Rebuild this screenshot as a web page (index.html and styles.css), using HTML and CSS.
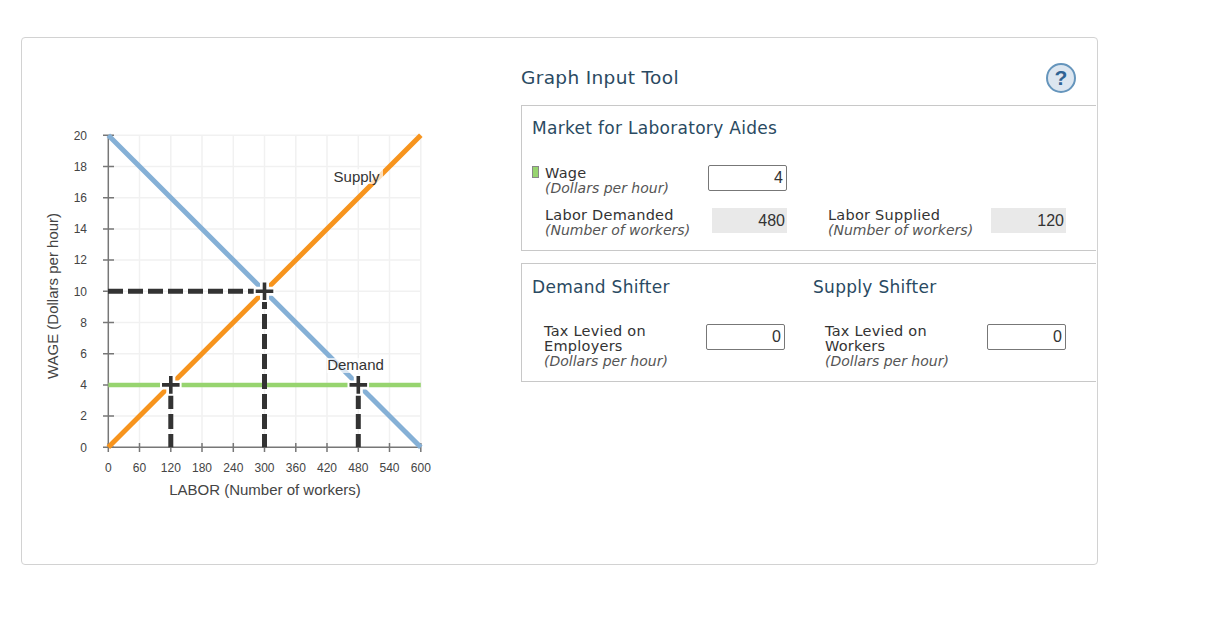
FILE: index.html
```html
<!DOCTYPE html>
<html lang="en">
<head>
  <meta charset="UTF-8">
  <title>Graph Input Tool</title>
  <link rel="stylesheet" href="styles.css">
</head>
<body>
  <div class="card">
    <!-- viewBox uses page coordinates so the plot numbers are easy to read -->
    <svg class="chart" viewBox="22 38 499 526" width="499" height="526">
      <path class="grid" d="M139.5 135V447M170.8 135V447M202 135V447M233.3 135V447M264.5 135V447M295.8 135V447M327 135V447M358.3 135V447M389.5 135V447M420.8 135V447"/>
      <path class="grid" d="M108 135.3H421M108 166.5H421M108 197.7H421M108 228.9H421M108 260.1H421M108 291.3H421M108 322.5H421M108 353.7H421M108 384.9H421M108 416.1H421"/>

      <path class="axis" d="M108.3 135V447.3H421"/>
      <path class="axis" d="M103 135.3H114M103 166.5H114M103 197.7H114M103 228.9H114M103 260.1H114M103 291.3H114M103 322.5H114M103 353.7H114M103 384.9H114M103 416.1H114M103 447.3H114"/>
      <path class="axis" d="M108.3 443V452M139.5 443V452M170.8 443V452M202 443V452M233.3 443V452M264.5 443V452M295.8 443V452M327 443V452M358.3 443V452M389.5 443V452M420.8 443V452"/>

      <text class="tick tick-y" x="87" y="139.5">20</text>
      <text class="tick tick-y" x="87" y="170.7">18</text>
      <text class="tick tick-y" x="87" y="201.9">16</text>
      <text class="tick tick-y" x="87" y="233.1">14</text>
      <text class="tick tick-y" x="87" y="264.3">12</text>
      <text class="tick tick-y" x="87" y="295.5">10</text>
      <text class="tick tick-y" x="87" y="326.7">8</text>
      <text class="tick tick-y" x="87" y="357.9">6</text>
      <text class="tick tick-y" x="87" y="389.1">4</text>
      <text class="tick tick-y" x="87" y="420.3">2</text>
      <text class="tick tick-y" x="87" y="451.5">0</text>

      <text class="tick" x="108.3" y="472">0</text>
      <text class="tick" x="139.5" y="472">60</text>
      <text class="tick" x="170.8" y="472">120</text>
      <text class="tick" x="202" y="472">180</text>
      <text class="tick" x="233.3" y="472">240</text>
      <text class="tick" x="264.5" y="472">300</text>
      <text class="tick" x="295.8" y="472">360</text>
      <text class="tick" x="327" y="472">420</text>
      <text class="tick" x="358.3" y="472">480</text>
      <text class="tick" x="389.5" y="472">540</text>
      <text class="tick" x="420.8" y="472">600</text>

      <text class="axis-title" x="265" y="495">LABOR (Number of workers)</text>
      <text class="axis-title" transform="translate(58 296) rotate(-90)">WAGE (Dollars per hour)</text>

      <line class="curve demand" x1="108.3" y1="135.3" x2="420.8" y2="447.3"/>
      <line class="curve supply" x1="108.3" y1="447.3" x2="420.8" y2="135.3"/>
      <line class="curve wage" x1="108.3" y1="384.9" x2="420.8" y2="384.9"/>

      <path class="dash dash-h" d="M108 291.3H264.5"/>
      <path class="dash dash-v" d="M170.8 447.3V384.9M264.5 447.3V291.3M358.3 447.3V384.9"/>

      <path class="halo" d="M160 384.9H181.6M170.8 374V395.8M253.7 291.3H275.3M264.5 280.5V302.1M347.5 384.9H369.1M358.3 374V395.8"/>
      <path class="plus" d="M162 384.9H179.6M170.8 376V393.8M255.7 291.3H273.3M264.5 282.5V300.1M349.5 384.9H367.1M358.3 376V393.8"/>

      <rect class="label-bg" x="333" y="169" width="50" height="15"/>
      <text class="curve-label" x="356.5" y="182">Supply</text>
      <rect class="label-bg" x="327" y="358" width="57" height="15"/>
      <text class="curve-label" x="355.5" y="370">Demand</text>
    </svg>

    <div class="tool">
      <div class="tool-header">
        <h1>Graph Input Tool</h1>
        <span class="help">?</span>
      </div>

      <div class="panel market">
        <h2>Market for Laboratory Aides</h2>
        <div class="row wage-row">
          <span class="swatch"></span>
          <div class="label">Wage<br><em>(Dollars per hour)</em></div>
          <div class="field">4</div>
        </div>
        <div class="row output-row">
          <div class="label">Labor Demanded<br><em>(Number of workers)</em></div>
          <div class="readout">480</div>
          <div class="label second">Labor Supplied<br><em>(Number of workers)</em></div>
          <div class="readout">120</div>
        </div>
      </div>

      <div class="panel shifters">
        <div class="shifter">
          <h2>Demand Shifter</h2>
          <div class="row">
            <div class="label">Tax Levied on<br>Employers<br><em>(Dollars per hour)</em></div>
            <div class="field">0</div>
          </div>
        </div>
        <div class="shifter">
          <h2>Supply Shifter</h2>
          <div class="row">
            <div class="label">Tax Levied on<br>Workers<br><em>(Dollars per hour)</em></div>
            <div class="field">0</div>
          </div>
        </div>
      </div>
    </div>
  </div>
</body>
</html>
```
FILE: styles.css
```css
body {
  margin: 0;
  background: #fff;
  font-family: "DejaVu Sans", Verdana, sans-serif;
  color: #333;
}

.card {
  display: flex;
  box-sizing: border-box;
  width: 1077px;
  height: 528px;
  margin: 37px 0 0 21px;
  border: 1px solid #d2d2d2;
  border-radius: 4px;
}

.chart {
  display: block;
  flex: none;
}

/* Chart */
.grid {
  fill: none;
  stroke: #f1f1f1;
  stroke-width: 1.5;
}

.axis {
  fill: none;
  stroke: #777;
  stroke-width: 1.5;
}

.tick {
  font-family: "Liberation Sans", Arial, sans-serif;
  font-size: 12px;
  fill: #444;
  text-anchor: middle;
}

.tick-y {
  text-anchor: end;
}

.axis-title {
  font-family: "Liberation Sans", Arial, sans-serif;
  font-size: 15px;
  fill: #444;
  text-anchor: middle;
}

.curve {
  stroke-width: 5;
}

.demand {
  stroke: #85b0d6;
}

.supply {
  stroke: #f7941d;
}

.wage {
  stroke: #97d46f;
  stroke-width: 4.5;
}

.dash {
  fill: none;
  stroke: #333;
  stroke-width: 5;
  stroke-dasharray: 15 5;
}

.dash-v {
  stroke-dashoffset: 1.7;
}

.halo {
  fill: none;
  stroke: #fff;
  stroke-width: 9;
}

.plus {
  fill: none;
  stroke: #333;
  stroke-width: 3.6;
}

.label-bg {
  fill: #fff;
  opacity: 0.7;
}

.curve-label {
  font-family: "Liberation Sans", Arial, sans-serif;
  font-size: 15px;
  fill: #333;
  text-anchor: middle;
}

/* Input tool */
.tool {
  flex: none;
  width: 575px;
}

.tool-header {
  display: flex;
  align-items: center;
  justify-content: space-between;
  height: 67px;
  padding-right: 20px;
  box-sizing: border-box;
  padding-top: 12px;
}

.tool-header h1 {
  margin: 0;
  font-size: 18.5px;
  font-weight: 400;
  letter-spacing: 0.35px;
  color: #2a4a62;
}

.help {
  width: 26px;
  height: 26px;
  border: 2px solid #6595bc;
  border-radius: 50%;
  background: #dce6f0;
  color: #2f6394;
  font-family: "Liberation Sans", Arial, sans-serif;
  font-size: 21px;
  font-weight: 700;
  line-height: 26px;
  text-align: center;
}

.panel {
  box-sizing: border-box;
  border: 1px solid #c8c8c8;
  border-right: none;
  padding: 0 10px;
}

.panel h2 {
  margin: 0;
  font-size: 17px;
  font-weight: 400;
  letter-spacing: 0.3px;
  line-height: 20px;
  color: #2a4a62;
}

.market {
  height: 146px;
  padding-top: 12px;
  margin-bottom: 12px;
}

.shifters {
  display: flex;
  height: 119px;
  padding-top: 13px;
}

.shifter {
  flex: none;
  width: 281px;
}

.row {
  display: flex;
  align-items: flex-start;
}

.label {
  font-size: 14.5px;
  letter-spacing: 0.25px;
  line-height: 15px;
  color: #333;
}

.label em {
  font-size: 14px;
  letter-spacing: 0;
  color: #555;
}

.wage-row {
  margin-top: 27px;
}

.swatch {
  width: 5px;
  height: 10px;
  margin: 1px 6px 0 0;
  border: 1px solid #888;
  background: #97d46f;
}

.wage-row .label {
  width: 163px;
  padding-top: 1px;
}

.field {
  box-sizing: border-box;
  width: 79px;
  height: 26px;
  padding-right: 3px;
  border: 1px solid #777;
  border-radius: 2px;
  background: #fff;
  font-family: "Liberation Sans", Arial, sans-serif;
  font-size: 16px;
  line-height: 24px;
  text-align: right;
}

.output-row {
  margin-top: 12px;
  padding-left: 13px;
}

.output-row .label {
  width: 167px;
}

.output-row .second {
  width: 163px;
  margin-left: 41px;
}

.readout {
  box-sizing: border-box;
  width: 75px;
  height: 25px;
  padding-right: 2px;
  background: #e9e9e9;
  font-family: "Liberation Sans", Arial, sans-serif;
  font-size: 16px;
  line-height: 25px;
  text-align: right;
}

.shifter .row {
  margin-top: 27px;
  padding-left: 12px;
}

.shifter .label {
  width: 162px;
}
```
